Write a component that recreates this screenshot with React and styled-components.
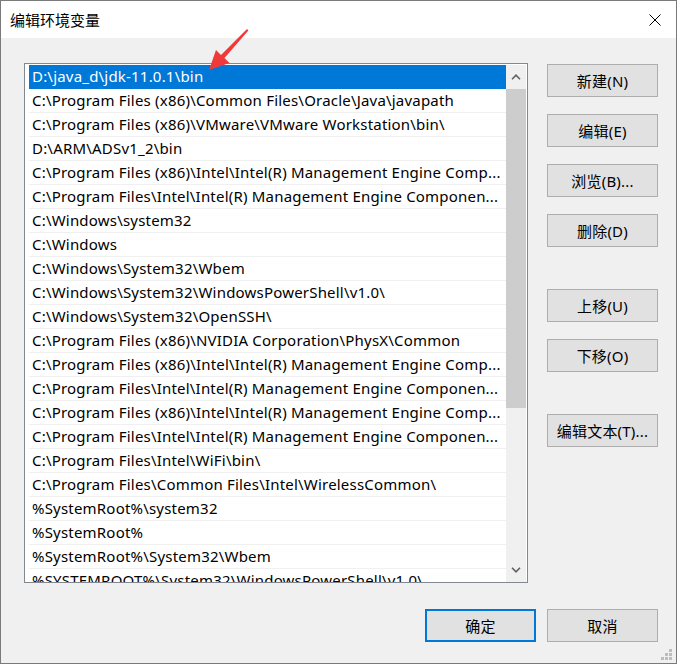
import React from "react";
import styled, { createGlobalStyle } from "styled-components";

const GlobalStyle = createGlobalStyle`
	html, body {
		margin: 0;
		padding: 0;
		background: #ffffff;
	}
	* {
		box-sizing: border-box;
	}
`;

const uiFont = `"Noto Sans", "Noto Sans CJK SC", sans-serif`;

const Window = styled.div`
	position: relative;
	width: 677px;
	height: 664px;
	border: 1px solid #7a7a7a;
	background: #f0f0f0;
	display: flex;
	flex-direction: column;
	font-family: ${uiFont};
	color: #000;
	overflow: hidden;
`;

const TitleBar = styled.div`
	height: 37px;
	flex-shrink: 0;
	background: #ffffff;
	display: flex;
	align-items: center;
	justify-content: space-between;
	padding: 0 14px 0 9px;
`;

const Title = styled.span`
	font-family: "Noto Sans CJK SC", sans-serif;
	font-size: 15px;
	line-height: 1;
	margin-top: -1px;
`;

const CloseButton = styled.div`
	width: 14px;
	height: 14px;
	display: flex;
	align-items: center;
	justify-content: center;
`;

const Body = styled.div`
	flex: 1;
	display: flex;
	flex-direction: column;
	padding: 25px 18px 0 23px;
`;

const Main = styled.div`
	display: flex;
	gap: 19px;
	align-items: flex-start;
`;

const ListBox = styled.div`
	width: 504px;
	height: 520px;
	border: 1px solid #828790;
	background: #ffffff;
	display: flex;
	padding: 1px 0 0 4px;
	overflow: hidden;
`;

const Rows = styled.div`
	flex: 1;
	overflow: hidden;
`;

const Row = styled.div`
	height: 24px;
	line-height: 23px;
	padding-left: 3px;
	font-size: 15px;
	letter-spacing: 0.2px;
	white-space: nowrap;
	overflow: hidden;
	border-bottom: 1px solid ${(p) => (p.$selected ? "#0078d7" : "#f0f0f0")};
	background: ${(p) => (p.$selected ? "#0078d7" : "transparent")};
	color: ${(p) => (p.$selected ? "#ffffff" : "#000000")};
`;

const ScrollBar = styled.div`
	width: 20px;
	margin-right: 1px;
	background: #f0f0f0;
	display: flex;
	flex-direction: column;
`;

const ScrollArrow = styled.div`
	height: 24px;
	flex-shrink: 0;
	display: flex;
	align-items: center;
	justify-content: center;
`;

const Thumb = styled.div`
	height: 319px;
	background: #cdcdcd;
	flex-shrink: 0;
`;

const Track = styled.div`
	flex: 1;
`;

const SideColumn = styled.div`
	width: 111px;
	display: flex;
	flex-direction: column;
	padding-top: 1px;
`;

const Button = styled.div`
	width: 111px;
	height: 33px;
	flex-shrink: 0;
	margin-top: ${(p) => p.$gap || 0}px;
	background: #e1e1e1;
	border: ${(p) => (p.$default ? "2px solid #0078d7" : "1px solid #adadad")};
	display: flex;
	align-items: center;
	justify-content: center;
	font-size: 15px;
	letter-spacing: 0.2px;
	font-family: ${uiFont};
	white-space: nowrap;
`;

const Footer = styled.div`
	display: flex;
	justify-content: flex-end;
	gap: 11px;
	margin-top: 26px;
`;

const Arrow = styled.svg`
	position: absolute;
	left: 198px;
	top: 24px;
	pointer-events: none;
`;

const Grip = styled.svg`
	position: absolute;
	right: 3px;
	bottom: 2px;
`;

const paths = [
	"D:\\java_d\\jdk-11.0.1\\bin",
	"C:\\Program Files (x86)\\Common Files\\Oracle\\Java\\javapath",
	"C:\\Program Files (x86)\\VMware\\VMware Workstation\\bin\\",
	"D:\\ARM\\ADSv1_2\\bin",
	"C:\\Program Files (x86)\\Intel\\Intel(R) Management Engine Comp...",
	"C:\\Program Files\\Intel\\Intel(R) Management Engine Componen...",
	"C:\\Windows\\system32",
	"C:\\Windows",
	"C:\\Windows\\System32\\Wbem",
	"C:\\Windows\\System32\\WindowsPowerShell\\v1.0\\",
	"C:\\Windows\\System32\\OpenSSH\\",
	"C:\\Program Files (x86)\\NVIDIA Corporation\\PhysX\\Common",
	"C:\\Program Files (x86)\\Intel\\Intel(R) Management Engine Comp...",
	"C:\\Program Files\\Intel\\Intel(R) Management Engine Componen...",
	"C:\\Program Files (x86)\\Intel\\Intel(R) Management Engine Comp...",
	"C:\\Program Files\\Intel\\Intel(R) Management Engine Componen...",
	"C:\\Program Files\\Intel\\WiFi\\bin\\",
	"C:\\Program Files\\Common Files\\Intel\\WirelessCommon\\",
	"%SystemRoot%\\system32",
	"%SystemRoot%",
	"%SystemRoot%\\System32\\Wbem",
	"%SYSTEMROOT%\\System32\\WindowsPowerShell\\v1.0\\",
];

const sideButtons = [
	{ label: "新建(N)", gap: 0 },
	{ label: "编辑(E)", gap: 17 },
	{ label: "浏览(B)...", gap: 17 },
	{ label: "删除(D)", gap: 17 },
	{ label: "上移(U)", gap: 42 },
	{ label: "下移(O)", gap: 17 },
	{ label: "编辑文本(T)...", gap: 42 },
];

const Chevron = ({ up }) => (
	<svg width="10" height="6" viewBox="0 0 10 6">
		<path
			d={up ? "M1 5.2 L5 1.2 L9 5.2" : "M1 0.8 L5 4.8 L9 0.8"}
			fill="none"
			stroke="#606060"
			strokeWidth="1.6"
		/>
	</svg>
);

const App = () => {
	return (
		<>
			<GlobalStyle />
			<Window>
				<TitleBar>
					<Title>编辑环境变量</Title>
					<CloseButton>
						<svg width="12" height="12" viewBox="0 0 12 12">
							<path d="M0.5 0.5 L11.5 11.5 M11.5 0.5 L0.5 11.5" stroke="#000" strokeWidth="1" />
						</svg>
					</CloseButton>
				</TitleBar>

				<Body>
					<Main>
						<ListBox>
							<Rows>
								{paths.map((p, i) => (
									<Row key={i} $selected={i === 0}>
										{p}
									</Row>
								))}
							</Rows>
							<ScrollBar>
								<ScrollArrow>
									<Chevron up />
								</ScrollArrow>
								<Thumb />
								<Track />
								<ScrollArrow>
									<Chevron />
								</ScrollArrow>
							</ScrollBar>
						</ListBox>

						<SideColumn>
							{sideButtons.map((b) => (
								<Button key={b.label} $gap={b.gap}>
									{b.label}
								</Button>
							))}
						</SideColumn>
					</Main>

					<Footer>
						<Button $default>确定</Button>
						<Button>取消</Button>
					</Footer>
				</Body>

				<Arrow width="56" height="48" viewBox="0 0 56 48">
					<path
						d="M48 4 L49.4 5.4 L25.5 33 L30.5 38 L10 45 L17 25 L22 30 Z"
						fill="#f03a3a"
					/>
				</Arrow>

				<Grip width="12" height="12" viewBox="0 0 12 12">
					<g fill="#bdbdbd">
						<rect x="8" y="0" width="3" height="3" />
						<rect x="4" y="4" width="3" height="3" />
						<rect x="8" y="4" width="3" height="3" />
						<rect x="0" y="8" width="3" height="3" />
						<rect x="4" y="8" width="3" height="3" />
						<rect x="8" y="8" width="3" height="3" />
					</g>
				</Grip>
			</Window>
		</>
	);
};

export default App;
